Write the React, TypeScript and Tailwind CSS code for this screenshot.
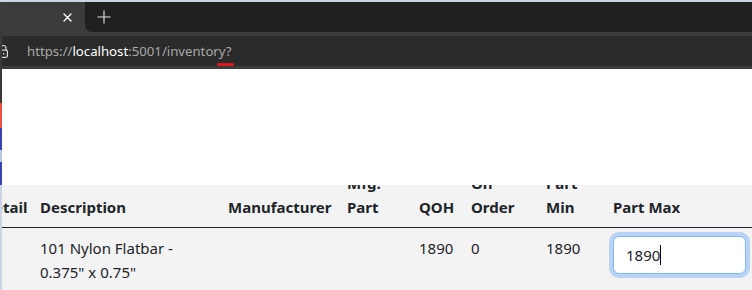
export default function App() {
  return (
    <div className="w-[752px] h-[290px] overflow-hidden flex flex-row bg-[#cdd5e5] font-['Noto_Sans',sans-serif]">
      {/* left frame strip */}
      <div className="w-[2px] flex flex-col shrink-0">
        <div className="h-[2px] bg-[#cdd5e5]" />
        <div className="h-[101px] bg-[#3a3a3a]" />
        <div className="h-[25px] bg-[#f0513f]" />
        <div className="h-[22px] bg-[#3b45b2]" />
        <div className="h-[12px] bg-[#b9c4e0]" />
        <div className="h-[23px] bg-[#3b45b2]" />
        <div className="flex-1 bg-[#cdd5e5]" />
      </div>
      {/* main */}
      <div className="flex-1 flex flex-col min-w-0">
        <div className="h-[2px] bg-[#cdd5e5]" />
        {/* tab strip */}
        <div className="h-[30px] flex flex-row bg-[#3b3b3b]">
          <div className="w-[83px] flex items-center justify-end pr-[13px]">
            <svg width="9" height="9" viewBox="0 0 9 9">
              <path d="M1 1L8 8M8 1L1 8" stroke="#ffffff" strokeWidth="1.4" strokeLinecap="round" />
            </svg>
          </div>
          <div className="flex-1 bg-[#202020] rounded-bl-[7px] flex items-center pl-[12px]">
            <svg width="14" height="14" viewBox="0 0 14 14">
              <path d="M7 0.5V13.5M0.5 7H13.5" stroke="#e6e6e6" strokeWidth="1.1" />
            </svg>
          </div>
        </div>
        <div className="h-[4px] bg-[#3b3b3b]" />
        {/* toolbar */}
        <div className="h-[30px] bg-[#2b2b2b] flex flex-row items-center overflow-hidden">
          <svg width="9" height="14" viewBox="0 0 9 14" className="ml-[-3px] shrink-0">
            <path d="M2 6V4a2.5 2.5 0 0 1 5 0v2" stroke="#d8d8d8" strokeWidth="1.2" fill="none" />
            <rect x="0.6" y="6.1" width="7.8" height="7.2" rx="1.2" stroke="#d8d8d8" strokeWidth="1.2" fill="none" />
            <rect x="4" y="9" width="1.2" height="1.6" fill="#d8d8d8" />
          </svg>
          <div className="ml-[19px] text-[13.2px] leading-[14px] relative text-[#a9a9a9] whitespace-nowrap">
            https://<span className="text-white">localhost</span>:5001/inventor
            <span className="relative">
              y?
              <span className="absolute left-[-2px] right-[-2px] bottom-[-6px] h-[3px] rounded-full bg-[#e0161e]" />
            </span>
          </div>
        </div>
        <div className="h-[3px] bg-[#3b3b3b]" />
        {/* white header area */}
        <div className="h-[116px] bg-white" />
        {/* table area */}
        <div className="flex-1 bg-[#f3f3f3] overflow-hidden text-[#212529] text-[15px] leading-[24px]">
          <table className="mt-[-22px] ml-[-27px] border-collapse table-fixed w-[800px]">
            <colgroup>
              <col className="w-[57px]" />
              <col className="w-[188px]" />
              <col className="w-[119px]" />
              <col className="w-[72px]" />
              <col className="w-[52px]" />
              <col className="w-[75px]" />
              <col className="w-[67px]" />
              <col className="w-[170px]" />
            </colgroup>
            <thead>
              <tr className="border-b border-[#212529] align-bottom font-bold text-left">
                <th className="p-2 font-bold">Detail</th>
                <th className="p-2 font-bold">Description</th>
                <th className="p-2 font-bold">Manufacturer</th>
                <th className="p-2 font-bold"><span className="block">Mfg.</span><span className="block">Part</span></th>
                <th className="p-2 font-bold">QOH</th>
                <th className="p-2 font-bold"><span className="block">On</span><span className="block">Order</span></th>
                <th className="p-2 font-bold"><span className="block">Part</span><span className="block">Min</span></th>
                <th className="p-2 font-bold whitespace-nowrap">Part Max</th>
              </tr>
            </thead>
            <tbody>
              <tr className="align-top">
                <td className="p-2"></td>
                <td className="p-2">
                  <span className="block">101 Nylon Flatbar -</span>
                  <span className="block">0.375" x 0.75"</span>
                </td>
                <td className="p-2"></td>
                <td className="p-2"></td>
                <td className="p-2">1890</td>
                <td className="p-2">0</td>
                <td className="p-2">1890</td>
                <td className="p-2">
                  <div className="w-[133px] h-[38px] rounded-[6px] border border-[#86b7fe] bg-white shadow-[0_0_0_4px_rgba(13,110,253,0.25)] flex items-center px-[12px]">
                    <span>1890</span>
                    <span className="w-px h-[20px] bg-black" />
                  </div>
                </td>
              </tr>
            </tbody>
          </table>
        </div>
      </div>
    </div>
  );
}
